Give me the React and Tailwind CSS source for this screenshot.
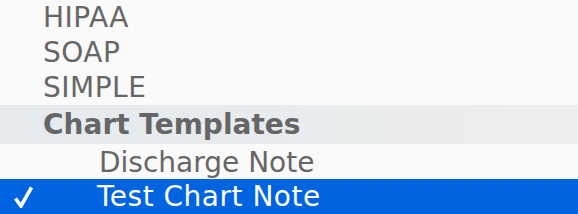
export default function App() {
  const font = { fontFamily: '"DejaVu Sans", Verdana, sans-serif' };
  return (
    <div className="w-[578px] h-[214px] overflow-hidden bg-[#fafafa] text-[28px] leading-none text-[#666666]" style={font}>
      <div className="h-[35px] flex items-center pl-[43px] tracking-[0.5px]">HIPAA</div>
      <div className="h-[35px] flex items-center pl-[43px] tracking-[0.5px]">SOAP</div>
      <div className="h-[35px] flex items-center pl-[43px] tracking-[0.5px]">SIMPLE</div>
      <div className="h-[39px] flex items-center pl-[43px] font-bold bg-gradient-to-r from-[#e4eaee] to-[#eeeeee]">Chart Templates</div>
      <div className="h-[35px] flex items-center pl-[99px] pt-[3px]">Discharge Note</div>
      <div className="h-[35px] flex items-center bg-[#0064e1] text-white">
        <span className="w-[97px] pl-[14px] flex items-center">
          <svg width="19" height="22" viewBox="0 0 19 22">
            <path d="M1.5 12.5 L7 20 L17.5 1.5" fill="none" stroke="white" strokeWidth="3.6" strokeLinejoin="miter" strokeLinecap="butt" />
          </svg>
        </span>
        <span className="tracking-[0.5px]">Test Chart Note</span>
      </div>
    </div>
  );
}
